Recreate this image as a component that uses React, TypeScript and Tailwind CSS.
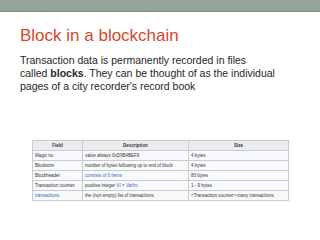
export default function App() {
  const rows: [React.ReactNode, React.ReactNode, string][] = [
    ["Magic no", "value always 0xD9B4BEF9", "4 bytes"],
    ["Blocksize", "number of bytes following up to end of block", "4 bytes"],
    ["Blockheader", <span className="text-[#3366cc]">consists of 6 items</span>, "80 bytes"],
    ["Transaction counter", <span>positive integer <span className="text-[#3366cc]">VI = VarInt</span></span>, "1 - 9 bytes"],
    [<span className="text-[#3366cc]">transactions</span>, "the (non empty) list of transactions", "<Transaction counter>-many transactions"],
  ];
  return (
    <div className="w-[320px] h-[240px] bg-white overflow-hidden" style={{ fontFamily: '"Liberation Sans", Arial, sans-serif' }}>
      <div className="h-[12px] bg-[#92a597] border-b border-[#7f9284]" />
      <div className="pl-[20px] pt-[14px]">
        <div className="text-[17px] leading-[20px] text-[#d9462c]">Block in a blockchain</div>
        <div className="mt-[8px] text-[10.5px] leading-[13px] text-[#262626]">
          Transaction data is permanently recorded in files<br />
          called <b>blocks</b>. They can be thought of as the individual<br />
          pages of a city recorder's record book
        </div>
      </div>
      <div className="pl-[32px] mt-[47px]">
        <table className="border-collapse text-[4.5px] leading-[9px] text-[#333]" style={{ tableLayout: 'fixed', width: 256 }}>
          <colgroup>
            <col style={{ width: 50 }} />
            <col style={{ width: 106 }} />
            <col style={{ width: 100 }} />
          </colgroup>
          <thead>
            <tr className="bg-[#eaecf0]">
              <th className="border border-[#c8ccd1] font-bold h-[8px]">Field</th>
              <th className="border border-[#c8ccd1] font-bold">Description</th>
              <th className="border border-[#c8ccd1] font-bold">Size</th>
            </tr>
          </thead>
          <tbody>
            {rows.map((r, i) => (
              <tr key={i} className="bg-[#f8f9fa]">
                <td className="border border-[#c8ccd1] px-[2px] h-[10px] whitespace-nowrap overflow-hidden">{r[0]}</td>
                <td className="border border-[#c8ccd1] px-[2px] whitespace-nowrap overflow-hidden">{r[1]}</td>
                <td className="border border-[#c8ccd1] px-[2px] whitespace-nowrap overflow-hidden">{r[2]}</td>
              </tr>
            ))}
          </tbody>
        </table>
      </div>
    </div>
  );
}
